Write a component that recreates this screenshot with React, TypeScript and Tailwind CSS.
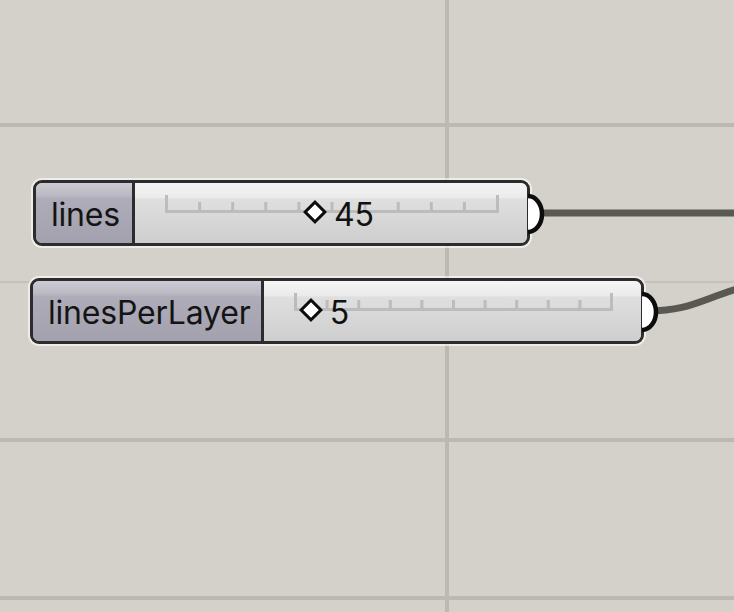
import React from "react";

type SliderProps = {
  name: string;
  value: number;
  min: number;
  max: number;
  left: number;
  top: number;
  nameWidth: number;
  bodyWidth: number;
};

const TICKS = 10;

// tick ruler drawn behind the knob
const Track = ({ width }: { width: number }) => {
  const ticks = Array.from({ length: TICKS + 1 }, (_, i) => (i * width) / TICKS);
  return (
    <svg
      className="absolute left-[29px] top-[11px]"
      width={width + 4}
      height={22}
      viewBox={`0 0 ${width + 4} 22`}
    >
      <rect x={1} y={16} width={width + 2} height={3} fill="#bcbcbc" />
      {ticks.map((x, i) => {
        const end = i === 0 || i === TICKS;
        return (
          <rect
            key={i}
            x={x + 1}
            y={end ? 1 : 8}
            width={3}
            height={end ? 18 : 11}
            fill="#bcbcbc"
          />
        );
      })}
    </svg>
  );
};

const Slider = ({ name, value, min, max, left, top, nameWidth, bodyWidth }: SliderProps) => {
  const trackWidth = bodyWidth - 61;
  const knobX = 31 + ((value - min) / (max - min)) * trackWidth;

  return (
    <div className="absolute" style={{ left, top }}>
      <div className="relative flex h-[66px] rounded-[9px] border-[3px] border-[#2c2c2c] shadow-[0_0_0_2px_rgba(255,255,255,0.6)] overflow-hidden">
        {/* name panel */}
        <div
          className="flex items-center pl-[15px] pt-[4px] border-r-[3px] border-[#2c2c2c] bg-[linear-gradient(to_bottom,#cdccd4_0%,#b9b8c2_22%,#adacb8_26%,#a2a1ad_100%)]"
          style={{ width: nameWidth }}
        >
          <span className="text-[32px] leading-none text-[#141414] tracking-[-0.2px]">{name}</span>
        </div>
        {/* slider body */}
        <div
          className="relative bg-[linear-gradient(to_bottom,#f5f5f5_0%,#ebebeb_24%,#dfdfdf_27%,#cecece_100%)]"
          style={{ width: bodyWidth }}
        >
          <Track width={trackWidth} />
          <div className="absolute top-[29px]" style={{ left: knobX }}>
            <div className="absolute left-0 top-0 w-[17px] h-[17px] -translate-x-1/2 -translate-y-1/2 rotate-45 border-[3.5px] border-[#0c0c0c] bg-white" />
            <span className="absolute left-[19px] top-0 -translate-y-1/2 mt-[3px] text-[32px] leading-none text-[#111]">
              {value}
            </span>
          </div>
        </div>
      </div>
      {/* output grip */}
      <svg
        className="absolute top-[13px]"
        style={{ left: nameWidth + bodyWidth + 4 }}
        width={20}
        height={42}
        viewBox="0 0 20 42"
      >
        <path d="M0 3 A 14 18 0 0 1 0 39" fill="white" stroke="#0c0c0c" strokeWidth={4.5} />
      </svg>
    </div>
  );
};

export default function App() {
  return (
    <div className="relative w-[734px] h-[612px] overflow-hidden bg-[#d4d1ca] font-['Inter',sans-serif]">
      {/* canvas grid */}
      <div className="absolute left-[445px] top-0 w-[4px] h-full bg-[#bdb9b2]" />
      <div className="absolute left-0 top-[123px] w-full h-[4px] bg-[#bdb9b2]" />
      <div className="absolute left-0 top-[438px] w-full h-[4px] bg-[#bdb9b2]" />
      <div className="absolute left-0 top-[596px] w-full h-[4px] bg-[#bdb9b2]" />
      <div className="absolute left-0 top-[281px] w-full h-[2px] bg-[#c6c2bb]" />

      {/* wires */}
      <svg className="absolute inset-0" width={734} height={612} viewBox="0 0 734 612">
        <path d="M536 213 L740 213" stroke="#595852" strokeWidth={7} fill="none" />
        <path d="M648 311 C 688 311, 700 300, 740 288" stroke="#595852" strokeWidth={7} fill="none" />
      </svg>

      <Slider name="lines" value={45} min={0} max={100} left={33} top={180} nameWidth={99} bodyWidth={392} />
      <Slider name="linesPerLayer" value={5} min={0} max={100} left={30} top={278} nameWidth={231} bodyWidth={377} />
    </div>
  );
}
